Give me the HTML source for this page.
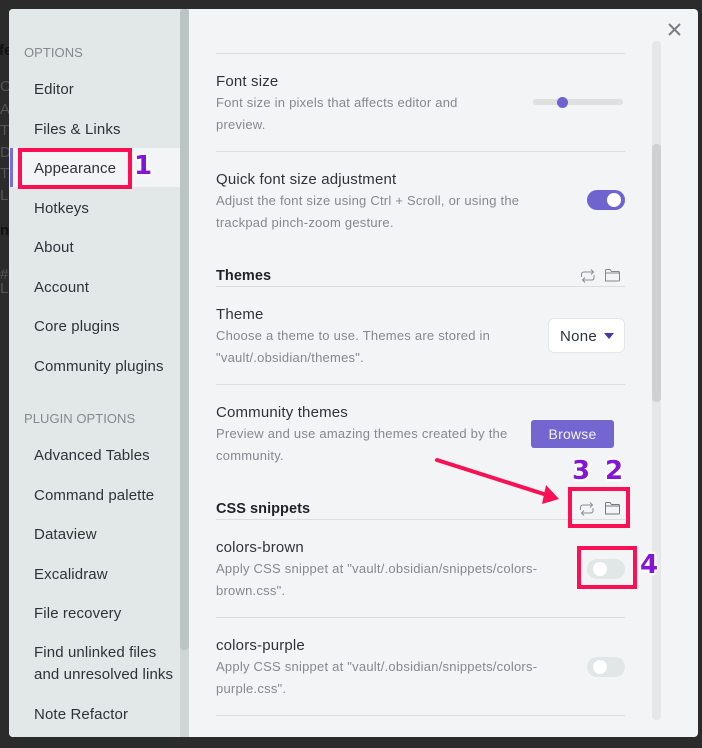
<!DOCTYPE html>
<html><head><meta charset="utf-8">
<style>
html,body{margin:0;padding:0;width:702px;height:748px;overflow:hidden;background:#2b2b2b;font-family:"Liberation Sans",sans-serif}
.a{position:absolute;white-space:nowrap}
#modal{position:absolute;left:9px;top:9px;width:689px;height:728px;background:#f3f4f6;border-radius:4px;overflow:hidden}
#side{position:absolute;left:9px;top:9px;width:171px;height:728px;background:#e2e7e7;border-radius:4px 0 0 4px}
.bg{color:#555;font-size:15px}
.n{left:34px;font-size:15px;color:#2e3338;letter-spacing:.12px;line-height:22px}
.h{left:24px;font-size:13px;color:#85898c;letter-spacing:.05px;line-height:18px}
.t{left:216px;font-size:15px;color:#2e3338;letter-spacing:.17px;line-height:20px}
.d{left:216px;font-size:13px;color:#85888d;letter-spacing:.23px;line-height:21.5px}
.hr{position:absolute;left:216px;width:409px;height:1px;background:#dcdddd}
.b{left:216px;font-size:14.5px;font-weight:bold;color:#1f2226;letter-spacing:.05px;line-height:20px}
.tog{position:absolute;width:38px;height:20px;border-radius:10px;background:#e1e6e6}
.tog i{position:absolute;left:6px;top:3px;width:14px;height:14px;border-radius:50%;background:#fff}
.box{position:absolute;border:4px solid #fb0f55;box-sizing:border-box}
.num{font-family:"DejaVu Sans",sans-serif;font-size:26px;font-weight:bold;color:#8414d6;line-height:28px;text-shadow:0 0 2px #fff,0 0 2px #fff,2px 0 1px #fff,-2px 0 1px #fff,0 2px 1px #fff,0 -2px 1px #fff,1px 1px 2px #fff,-1px -1px 2px #fff,1px -1px 2px #fff,-1px 1px 2px #fff}
</style></head><body>
<div class="a bg" style="left:-1px;top:42px;font-weight:bold;color:#111">fe</div>
<div class="a bg" style="left:0;top:78px">O</div>
<div class="a bg" style="left:0;top:101px">A</div>
<div class="a bg" style="left:0;top:122px">T</div>
<div class="a bg" style="left:0;top:144px">D</div>
<div class="a bg" style="left:0;top:165px">T</div>
<div class="a bg" style="left:0;top:187px">L</div>
<div class="a bg" style="left:0;top:222px;font-weight:bold;color:#111">n</div>
<div class="a bg" style="left:0;top:266px">#</div>
<div class="a bg" style="left:0;top:280px">L</div>

<div id="modal"></div>
<div id="side"></div>
<div class="a" style="left:180px;top:9px;width:9px;height:728px;background:#d0d6d6"></div>
<div class="a" style="left:180px;top:9px;width:9px;height:641px;background:#bcc3c3;border-radius:4px 4px 4px 4px"></div>
<div class="a" style="left:11px;top:148px;width:169px;height:39px;background:#f3f4f6"></div>
<div class="a" style="left:10px;top:148px;width:3px;height:39px;background:#7b6cd9"></div>

<div class="a h" style="top:44px">OPTIONS</div>
<div class="a n" style="top:79px">Editor</div>
<div class="a n" style="top:119px">Files &amp; Links</div>
<div class="a n" style="top:158px">Appearance</div>
<div class="a n" style="top:198px">Hotkeys</div>
<div class="a n" style="top:237px">About</div>
<div class="a n" style="top:277px">Account</div>
<div class="a n" style="top:316px">Core plugins</div>
<div class="a n" style="top:356px">Community plugins</div>
<div class="a h" style="top:410px">PLUGIN OPTIONS</div>
<div class="a n" style="top:445px">Advanced Tables</div>
<div class="a n" style="top:485px">Command palette</div>
<div class="a n" style="top:524px">Dataview</div>
<div class="a n" style="top:564px">Excalidraw</div>
<div class="a n" style="top:603px">File recovery</div>
<div class="a n" style="top:642px">Find unlinked files</div>
<div class="a n" style="top:664px">and unresolved links</div>
<div class="a n" style="top:704px">Note Refactor</div>

<div class="box" style="left:18px;top:148px;width:114px;height:41px"></div>
<div class="a num" style="left:134px;top:152px">1</div>

<div class="hr" style="top:53px"></div>
<div class="a t" style="top:72px">Font size</div>
<div class="a d" style="top:92px">Font size in pixels that affects editor and</div>
<div class="a d" style="top:114px">preview.</div>
<div class="a" style="left:533px;top:99px;width:90px;height:6px;border-radius:3px;background:#e0e0e0"></div>
<div class="a" style="left:557px;top:97px;width:11px;height:11px;border-radius:50%;background:#6f63cf"></div>

<div class="hr" style="top:151px"></div>
<div class="a t" style="top:170px">Quick font size adjustment</div>
<div class="a d" style="top:190px">Adjust the font size using Ctrl + Scroll, or using the</div>
<div class="a d" style="top:212px">trackpad pinch-zoom gesture.</div>
<div class="tog" style="left:587px;top:190px;background:#6f63cf"><i style="left:20px"></i></div>

<div class="a b" style="top:266px">Themes</div>
<div class="hr" style="top:286px"></div>
<svg class="a" style="left:580px;top:268px" width="16" height="16" viewBox="0 0 16 16" fill="none" stroke="#8a8d90" stroke-width="1"><path d="M1.500 9V6.500C1.500 5 2.500 4 4 4H13.500M11 1.500l2.500 2.500-2.500 2.500M14 7v2.500C14 11 13 12 11.500 12H2.500M5 14.500l-2.500-2.500 2.500-2.500"/></svg>
<svg class="a" style="left:604px;top:267px" width="17" height="16" viewBox="0 0 17 16" fill="none" stroke="#85888b" stroke-width="1"><path d="M1.500 14V3.500C1.500 3 2 2.500 2.500 2.500H6L7.500 4.500H14.500C15 4.500 15.500 5 15.500 5.500V13C15.500 13.500 15 14 14.500 14H1.500ZM1.500 6H15.500"/></svg>

<div class="a t" style="top:305px">Theme</div>
<div class="a d" style="top:325px">Choose a theme to use. Themes are stored in</div>
<div class="a d" style="top:347px">"vault/.obsidian/themes".</div>
<div class="a" style="left:548px;top:318px;width:77px;height:35px;box-sizing:border-box;background:#fff;border:1px solid #e4e6e8;border-radius:6px"></div>
<div class="a" style="left:560px;top:327px;font-size:15px;color:#2e3338;letter-spacing:.3px;line-height:20px">None</div>
<div class="a" style="left:604px;top:333px;width:0;height:0;border-left:5px solid transparent;border-right:5px solid transparent;border-top:6px solid #4a35a8"></div>

<div class="hr" style="top:384px"></div>
<div class="a t" style="top:403px">Community themes</div>
<div class="a d" style="top:423px">Preview and use amazing themes created by the</div>
<div class="a d" style="top:445px">community.</div>
<div class="a" style="left:531px;top:420px;width:83px;height:28px;background:#7366d0;border-radius:3px;color:#f4f3fb;font-size:14px;letter-spacing:.2px;line-height:28px;text-align:center">Browse</div>

<div class="a b" style="top:499px">CSS snippets</div>
<div class="hr" style="top:519px"></div>
<svg class="a" style="left:579px;top:501px" width="16" height="16" viewBox="0 0 16 16" fill="none" stroke="#8a8d90" stroke-width="1"><path d="M1.500 9V6.500C1.500 5 2.500 4 4 4H13.500M11 1.500l2.500 2.500-2.500 2.500M14 7v2.500C14 11 13 12 11.500 12H2.500M5 14.500l-2.500-2.500 2.500-2.500"/></svg>
<svg class="a" style="left:604px;top:500px" width="17" height="16" viewBox="0 0 17 16" fill="none" stroke="#76797c" stroke-width="1"><path d="M1.500 14V3.500C1.500 3 2 2.500 2.500 2.500H6L7.500 4.500H14.500C15 4.500 15.500 5 15.500 5.500V13C15.500 13.500 15 14 14.500 14H1.500ZM1.500 6H15.500"/></svg>

<div class="a t" style="top:538px">colors-brown</div>
<div class="a d" style="top:558px">Apply CSS snippet at "vault/.obsidian/snippets/colors-</div>
<div class="a d" style="top:580px">brown.css".</div>
<div class="tog" style="left:587px;top:559px"><i></i></div>

<div class="hr" style="top:617px"></div>
<div class="a t" style="top:636px">colors-purple</div>
<div class="a d" style="top:656px">Apply CSS snippet at "vault/.obsidian/snippets/colors-</div>
<div class="a d" style="top:678px">purple.css".</div>
<div class="tog" style="left:587px;top:657px"><i></i></div>
<div class="hr" style="top:715px"></div>

<div class="a" style="left:652px;top:41px;width:9px;height:679px;background:#e6e7e9;border-radius:4px"></div>
<div class="a" style="left:652px;top:144px;width:9px;height:258px;background:#cfd0d1;border-radius:4px"></div>
<svg class="a" style="left:667px;top:22px" width="15" height="15" viewBox="0 0 15 15" fill="none" stroke="#7b7d80" stroke-width="2"><path d="M2 2l11 11M13 2L2 13"/></svg>

<svg class="a" style="left:430px;top:452px" width="140" height="56" viewBox="0 0 140 56"><path d="M7 8L120 44" stroke="#fb0f55" stroke-width="4" stroke-linecap="round"/><path d="M129 47L112 52L116 33Z" fill="#fb0f55"/></svg>
<div class="box" style="left:568px;top:487px;width:62px;height:41px"></div>
<div class="box" style="left:577px;top:546px;width:60px;height:43px"></div>
<div class="a num" style="left:572px;top:457px">3</div>
<div class="a num" style="left:605px;top:457px">2</div>
<div class="a num" style="left:640px;top:551px">4</div>
</body></html>
